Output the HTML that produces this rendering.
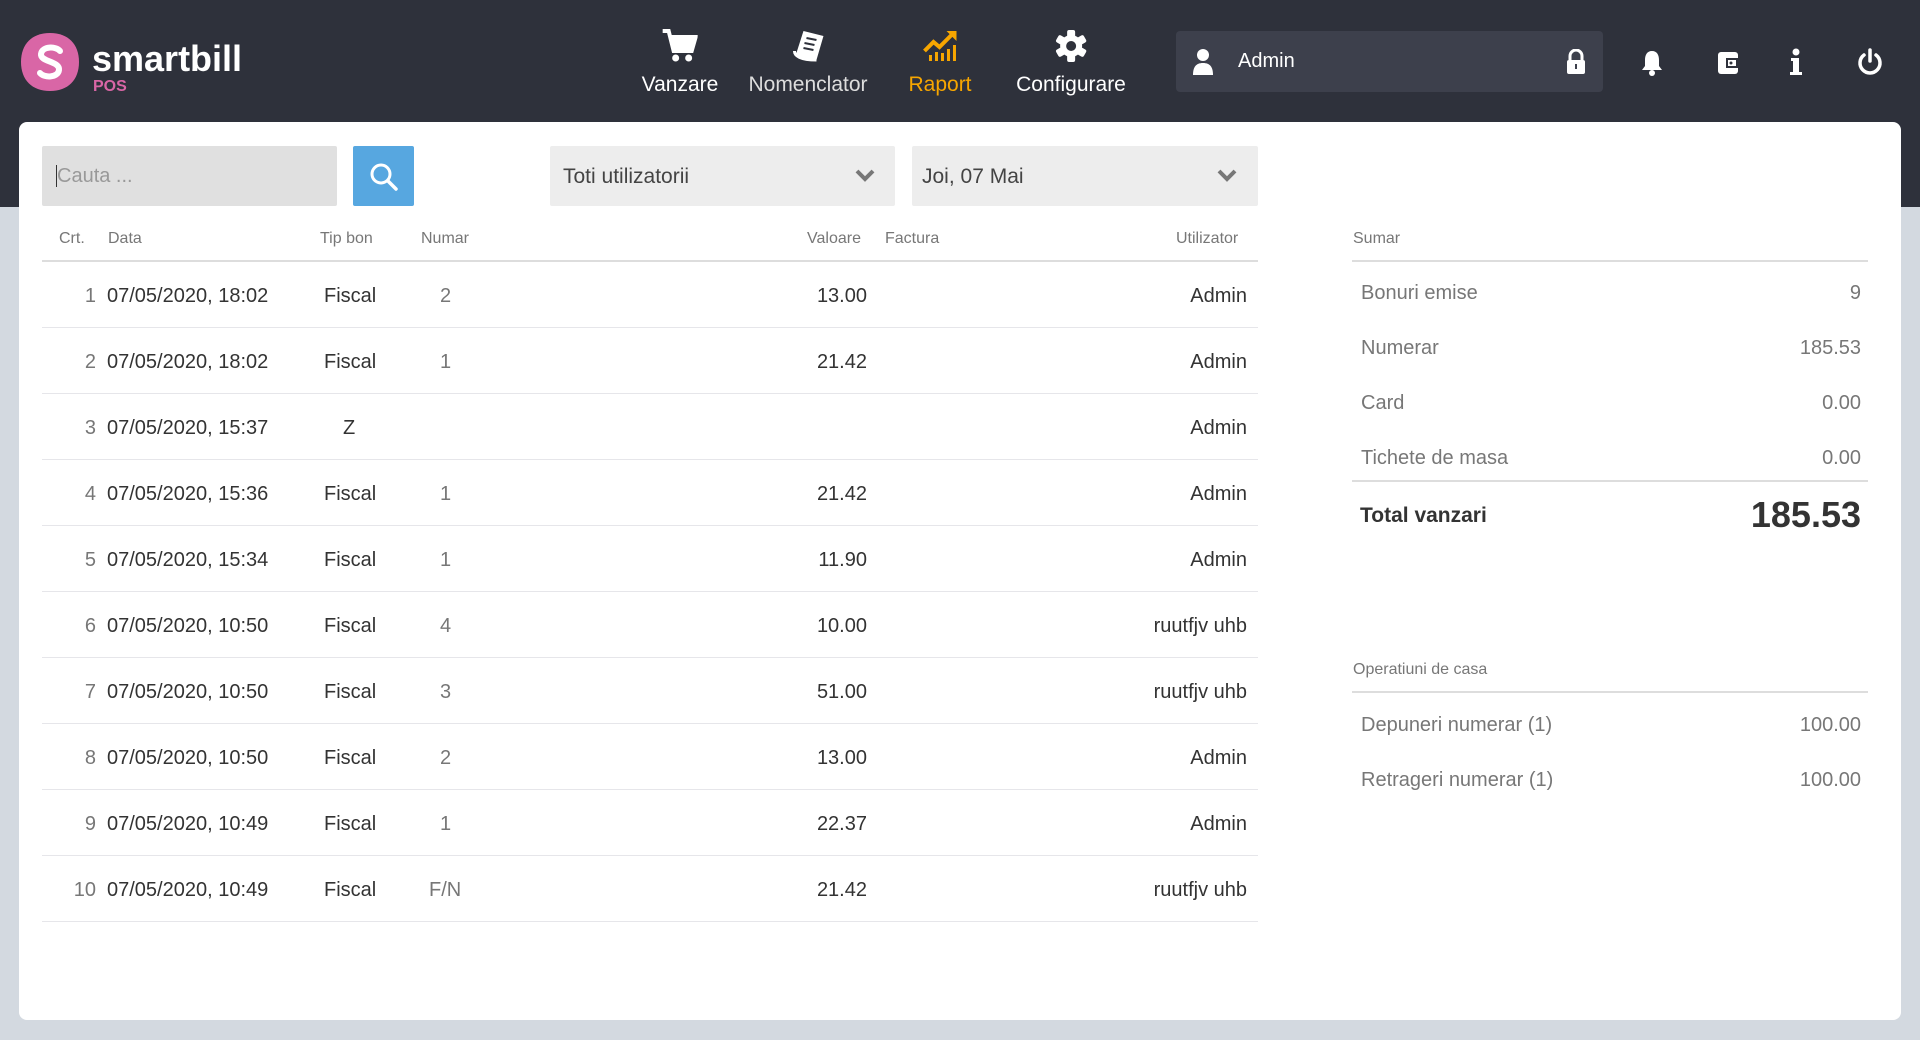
<!DOCTYPE html>
<html><head><meta charset="utf-8"><style>
*{margin:0;padding:0;box-sizing:border-box}
body{width:1920px;height:1040px;background:#d3d9e0;font-family:"Liberation Sans",sans-serif;position:relative;overflow:hidden}
.hdr{position:absolute;left:0;top:0;width:1920px;height:207px;background:#2e313b}
.abs{position:absolute}
.nav{position:absolute;top:0;text-align:center;color:#fff;font-size:21px;transform:translateX(-50%);white-space:nowrap}
.nav svg{display:block;margin:29px auto 10px}
.panel{position:absolute;left:19px;top:122px;width:1882px;height:898px;background:#fff;border-radius:8px}
.th{position:absolute;top:230px;font-size:16px;color:#777}
.row{position:absolute;left:42px;width:1216px;height:66px;border-bottom:1px solid #e6e6ea;font-size:20px;color:#333}
.row span{position:absolute;top:23px;white-space:nowrap}
.g{color:#777}
.s{position:absolute;left:1352px;width:516px;height:55px;font-size:20px;color:#777}
.s span{position:absolute;top:17px}
.s .v{right:7px}
.s .l{left:9px}
</style></head><body>
<div class="hdr"></div>
<svg class="abs" style="left:20px;top:32px" width="60" height="60" viewBox="0 0 60 60"><path d="M30 1C48 1 59 12 59 30S48 59 30 59 1 48 1 30 12 1 30 1Z" fill="#d966a6"/><path d="M40 19C36 14 22 14 21 22 20 30 40 29 39 38 38 46 24 46 20 41" fill="none" stroke="#fff" stroke-width="6" stroke-linecap="round"/></svg>
<div class="abs" style="left:92px;top:38px;color:#fff;font-size:36px;font-weight:bold">smartbill</div>
<div class="abs" style="left:93px;top:78px;color:#d966a6;font-size:16px;font-weight:bold">POS</div>
<div class="nav" style="left:680px"><svg width="36" height="34" viewBox="0 0 36 34"><path d="M1 2h6l5 20h18l4-14H9" fill="none" stroke="#fff" stroke-width="4"/><path d="M10 8h24l-4 14H13z" fill="#fff"/><circle cx="14" cy="29" r="3.5" fill="#fff"/><circle cx="27" cy="29" r="3.5" fill="#fff"/></svg>Vanzare</div>
<div class="nav" style="left:808px"><svg width="34" height="34" viewBox="0 0 34 34"><path d="M12 2l20 5-7 24-21-4z" fill="#fff"/><path d="M3 22c0 5 6 9 22 9" fill="none" stroke="#fff" stroke-width="3"/><path d="M15 9l10 2M13 14l10 2M12 19l10 2" stroke="#2e313b" stroke-width="2"/></svg><span style="color:#ddd">Nomenclator</span></div>
<div class="nav" style="left:940px;color:#f7a600"><svg width="36" height="34" viewBox="0 0 36 34"><path d="M2 22l9-9 6 5 12-12" fill="none" stroke="#f7a600" stroke-width="4"/><path d="M24 2h10v10z" fill="#f7a600"/><path d="M8 32v-6M14 32v-9M20 32v-8M26 32v-12M32 32v-16" stroke="#f7a600" stroke-width="3"/></svg>Raport</div>
<div class="nav" style="left:1071px"><svg width="34" height="34" viewBox="0 0 34 34"><g fill="#fff"><circle cx="17" cy="17" r="11"/><rect x="13" y="1" width="8" height="32" rx="2"/><rect x="13" y="1" width="8" height="32" rx="2" transform="rotate(60 17 17)"/><rect x="13" y="1" width="8" height="32" rx="2" transform="rotate(120 17 17)"/></g><circle cx="17" cy="17" r="5" fill="#2e313b"/></svg>Configurare</div>
<div class="abs" style="left:1176px;top:31px;width:427px;height:61px;background:#3d404c;border-radius:4px"></div>
<svg class="abs" style="left:1192px;top:48px" width="22" height="28" viewBox="0 0 22 28"><circle cx="11" cy="7" r="6" fill="#fff"/><path d="M1 27c0-8 3-12 10-12s10 4 10 12z" fill="#fff"/></svg>
<div class="abs" style="left:1238px;top:50px;color:#fff;font-size:20px">Admin</div>
<svg class="abs" style="left:1566px;top:49px" width="20" height="26" viewBox="0 0 20 26"><path d="M4 11V7a6 6 0 0112 0v4" fill="none" stroke="#fff" stroke-width="3"/><rect x="1" y="11" width="18" height="14" rx="2" fill="#fff"/><rect x="9" y="15" width="2" height="5" fill="#3d404c"/></svg>
<svg class="abs" style="left:1640px;top:49px" width="24" height="28" viewBox="0 0 24 28"><path d="M12 2c5 0 7 4 7 9v6l3 4H2l3-4v-6c0-5 2-9 7-9z" fill="#fff"/><circle cx="12" cy="24" r="3" fill="#fff"/></svg>
<svg class="abs" style="left:1717px;top:51px" width="22" height="24" viewBox="0 0 22 24"><rect x="1" y="1" width="20" height="22" rx="3" fill="#fff"/><rect x="9" y="7" width="12" height="10" fill="#2e313b"/><rect x="11" y="9" width="8" height="6" fill="#fff"/><circle cx="14" cy="12" r="1.5" fill="#2e313b"/></svg>
<svg class="abs" style="left:1788px;top:48px" width="16" height="28" viewBox="0 0 16 28"><circle cx="8" cy="4" r="3.5" fill="#fff"/><path d="M3 10h8v14h3v3H2v-3h3v-11H3z" fill="#fff"/></svg>
<svg class="abs" style="left:1856px;top:48px" width="28" height="28" viewBox="0 0 28 28"><path d="M8 7a10 10 0 1012 0" fill="none" stroke="#fff" stroke-width="3.5" stroke-linecap="round"/><path d="M14 2v11" stroke="#fff" stroke-width="3.5" stroke-linecap="round"/></svg>
<div class="panel"></div>
<div class="abs" style="left:42px;top:146px;width:295px;height:60px;background:#e0e0e0;border-radius:2px"></div>
<div class="abs" style="left:56px;top:165px;font-size:20px;color:#999"><span style="border-left:1px solid #333"></span>Cauta ...</div>
<div class="abs" style="left:353px;top:146px;width:61px;height:60px;background:#57a7e0;border-radius:2px"></div>
<svg class="abs" style="left:369px;top:162px" width="30" height="30" viewBox="0 0 30 30"><circle cx="12" cy="12" r="9" fill="none" stroke="#fff" stroke-width="3"/><path d="M19 19l8 8" stroke="#fff" stroke-width="3.5" stroke-linecap="round"/></svg>
<div class="abs" style="left:550px;top:146px;width:345px;height:60px;background:#ededed;border-radius:2px"></div>
<div class="abs" style="left:563px;top:165px;font-size:21px;color:#444">Toti utilizatorii</div>
<svg class="abs" style="left:855px;top:168px" width="20" height="14" viewBox="0 0 20 14"><path d="M2 3l8 8 8-8" fill="none" stroke="#777" stroke-width="4"/></svg>
<div class="abs" style="left:912px;top:146px;width:346px;height:60px;background:#ededed;border-radius:2px"></div>
<div class="abs" style="left:922px;top:165px;font-size:21px;color:#444">Joi, 07 Mai</div>
<svg class="abs" style="left:1217px;top:168px" width="20" height="14" viewBox="0 0 20 14"><path d="M2 3l8 8 8-8" fill="none" stroke="#777" stroke-width="4"/></svg>
<div class="th" style="left:59px">Crt.</div>
<div class="th" style="left:108px">Data</div>
<div class="th" style="left:320px">Tip bon</div>
<div class="th" style="left:421px">Numar</div>
<div class="th" style="left:807px">Valoare</div>
<div class="th" style="left:885px">Factura</div>
<div class="th" style="left:1176px">Utilizator</div>
<div class="abs" style="left:42px;top:260px;width:1216px;height:2px;background:#ddd"></div>
<div class="row" style="top:262px"><span class="g" style="right:1162px">1</span><span style="left:65px">07/05/2020, 18:02</span><span style="left:282px">Fiscal</span><span class="g" style="left:398px">2</span><span style="right:391px">13.00</span><span style="right:11px">Admin</span></div>
<div class="row" style="top:328px"><span class="g" style="right:1162px">2</span><span style="left:65px">07/05/2020, 18:02</span><span style="left:282px">Fiscal</span><span class="g" style="left:398px">1</span><span style="right:391px">21.42</span><span style="right:11px">Admin</span></div>
<div class="row" style="top:394px"><span class="g" style="right:1162px">3</span><span style="left:65px">07/05/2020, 15:37</span><span style="left:301px">Z</span><span style="right:11px">Admin</span></div>
<div class="row" style="top:460px"><span class="g" style="right:1162px">4</span><span style="left:65px">07/05/2020, 15:36</span><span style="left:282px">Fiscal</span><span class="g" style="left:398px">1</span><span style="right:391px">21.42</span><span style="right:11px">Admin</span></div>
<div class="row" style="top:526px"><span class="g" style="right:1162px">5</span><span style="left:65px">07/05/2020, 15:34</span><span style="left:282px">Fiscal</span><span class="g" style="left:398px">1</span><span style="right:391px">11.90</span><span style="right:11px">Admin</span></div>
<div class="row" style="top:592px"><span class="g" style="right:1162px">6</span><span style="left:65px">07/05/2020, 10:50</span><span style="left:282px">Fiscal</span><span class="g" style="left:398px">4</span><span style="right:391px">10.00</span><span style="right:11px">ruutfjv uhb</span></div>
<div class="row" style="top:658px"><span class="g" style="right:1162px">7</span><span style="left:65px">07/05/2020, 10:50</span><span style="left:282px">Fiscal</span><span class="g" style="left:398px">3</span><span style="right:391px">51.00</span><span style="right:11px">ruutfjv uhb</span></div>
<div class="row" style="top:724px"><span class="g" style="right:1162px">8</span><span style="left:65px">07/05/2020, 10:50</span><span style="left:282px">Fiscal</span><span class="g" style="left:398px">2</span><span style="right:391px">13.00</span><span style="right:11px">Admin</span></div>
<div class="row" style="top:790px"><span class="g" style="right:1162px">9</span><span style="left:65px">07/05/2020, 10:49</span><span style="left:282px">Fiscal</span><span class="g" style="left:398px">1</span><span style="right:391px">22.37</span><span style="right:11px">Admin</span></div>
<div class="row" style="top:856px"><span class="g" style="right:1162px">10</span><span style="left:65px">07/05/2020, 10:49</span><span style="left:282px">Fiscal</span><span class="g" style="left:387px">F/N</span><span style="right:391px">21.42</span><span style="right:11px">ruutfjv uhb</span></div>
<div class="th" style="left:1353px">Sumar</div>
<div class="abs" style="left:1352px;top:260px;width:516px;height:2px;background:#ddd"></div>
<div class="s" style="top:265px"><span class="l">Bonuri emise</span><span class="v">9</span></div>
<div class="s" style="top:320px"><span class="l">Numerar</span><span class="v">185.53</span></div>
<div class="s" style="top:375px"><span class="l">Card</span><span class="v">0.00</span></div>
<div class="s" style="top:430px"><span class="l">Tichete de masa</span><span class="v">0.00</span></div>
<div class="abs" style="left:1352px;top:480px;width:516px;height:2px;background:#ddd"></div>
<div class="abs" style="left:1360px;top:504px;font-size:21px;font-weight:bold;color:#333">Total vanzari</div>
<div class="abs" style="right:59px;top:494px;font-size:36px;font-weight:bold;color:#333">185.53</div>
<div class="th" style="left:1353px;top:661px;font-size:16px">Operatiuni de casa</div>
<div class="abs" style="left:1352px;top:691px;width:516px;height:2px;background:#ddd"></div>
<div class="s" style="top:697px"><span class="l">Depuneri numerar (1)</span><span class="v">100.00</span></div>
<div class="s" style="top:752px"><span class="l">Retrageri numerar (1)</span><span class="v">100.00</span></div>
</body></html>
